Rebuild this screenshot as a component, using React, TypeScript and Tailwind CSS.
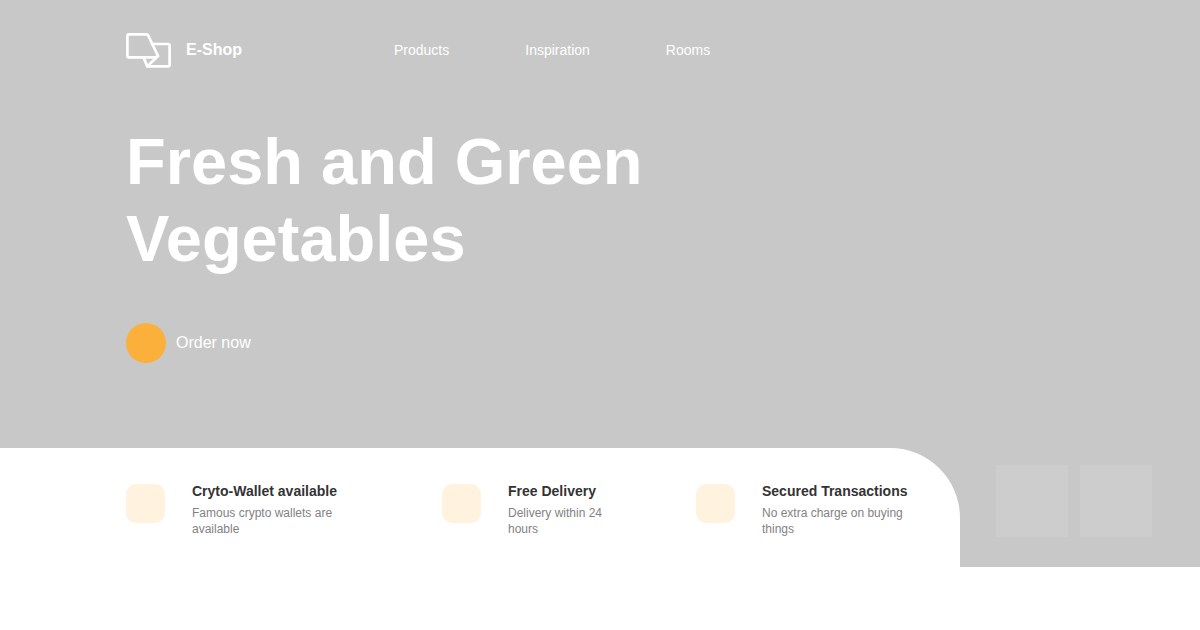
const links = ["Products", "Inspiration", "Rooms"];

const features = [
  { title: "Cryto-Wallet available", text: "Famous crypto wallets are available", width: "w-[316px]", copy: "w-[166px]" },
  { title: "Free Delivery", text: "Delivery within 24 hours", width: "w-[254px]", copy: "w-[104px]" },
  { title: "Secured Transactions", text: "No extra charge on buying things", width: "w-[264px]", copy: "w-[151px]" },
];

function Logo() {
  return (
    <svg
      className="shrink-0"
      width="45"
      height="36"
      viewBox="0 0 45 36"
      fill="none"
      stroke="white"
      strokeWidth="2.7"
      strokeLinejoin="round"
      strokeLinecap="round"
      aria-hidden="true"
    >
      <path d="M3 2.4H20.4Q21.8 2.4 22.4 3.7L32 24L29.5 25.4H3Q1.4 25.4 1.4 23.8V4Q1.4 2.4 3 2.4Z" />
      <path d="M26 12H42Q43.6 12 43.6 13.6V32.8Q43.6 34.4 42 34.4H21.3L17.5 25.4" />
      <path d="M32 24L21.3 34.4" />
    </svg>
  );
}

export default function App() {
  return (
    <div className="min-h-screen bg-white font-['Liberation_Sans',Arial,sans-serif]">
      <main className="bg-[#c8c8c8]">
        <header className="flex h-[100px] items-center pl-[126px] text-white">
          <a href="#home" className="flex w-[268px] items-center gap-[15px] text-base font-bold">
            <Logo />
            E-Shop
          </a>
          <nav className="flex gap-[76px] text-sm">
            {links.map((label) => (
              <a key={label} href={`#${label.toLowerCase()}`}>
                {label}
              </a>
            ))}
          </nav>
        </header>
        <section className="flex flex-col items-start pt-[23px] pb-[85px] pl-[126px] text-white">
          <h1 className="max-w-[560px] text-[65px] leading-[77px] font-bold">Fresh and Green Vegetables</h1>
          <button type="button" className="mt-[46px] flex items-center gap-[10px] text-base">
            <span className="size-10 rounded-full bg-[#fbb03b]" />
            Order now
          </button>
        </section>
        <section className="flex">
          <ul className="flex w-4/5 rounded-tr-[70px] bg-white pt-9 pb-[30px] pl-[126px]">
            {features.map((feature) => (
              <li key={feature.title} className={`flex shrink-0 gap-[27px] ${feature.width}`}>
                <span className="size-[39px] shrink-0 rounded-[10px] bg-[#fff3df]" />
                <div>
                  <h2 className="text-sm leading-[14px] font-bold whitespace-nowrap text-[#333]">{feature.title}</h2>
                  <p className={`mt-[7px] text-xs leading-4 text-[#828282] ${feature.copy}`}>{feature.text}</p>
                </div>
              </li>
            ))}
          </ul>
          <div className="flex flex-1 gap-3 pt-[17px] pl-9">
            <button type="button" aria-label="Previous" className="size-[72px] bg-[#cdcdcd]" />
            <button type="button" aria-label="Next" className="size-[72px] bg-[#cdcdcd]" />
          </div>
        </section>
      </main>
    </div>
  );
}
